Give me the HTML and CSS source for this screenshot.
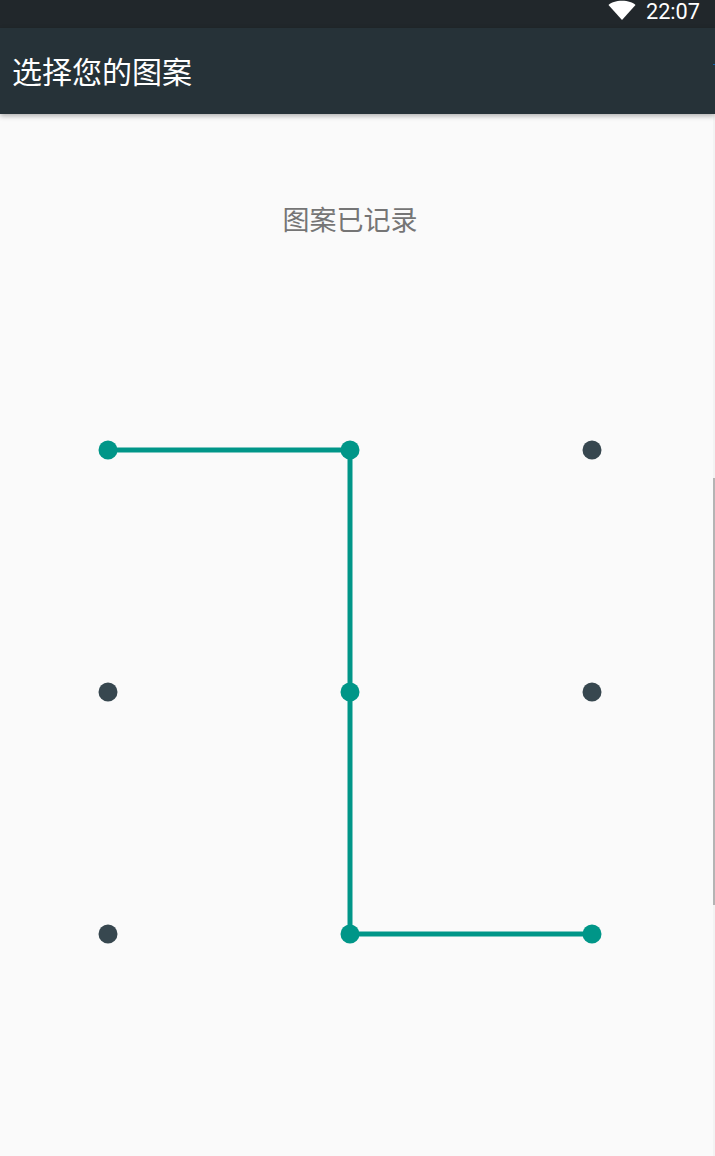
FILE: index.html
```html
<!DOCTYPE html>
<html lang="zh-CN">
<head>
<meta charset="utf-8">
<title>选择您的图案</title>
<link rel="stylesheet" href="styles.css">
</head>
<body>
<div class="screen">
  <header class="status-bar">
    <svg class="wifi" viewBox="0 0 28 20" width="28" height="20"><path d="M14 20 L0.5 5 C3 2.6 8 0.8 14 0.8 C20 0.8 25 2.6 27.5 5 Z" fill="#fff"/></svg>
    <span class="time">22:07</span>
  </header>
  <div class="app-bar">
    <h1 class="title">选择您的图案</h1>
    <span class="edge-mark"></span>
  </div>
  <main class="content">
    <p class="message">图案已记录</p>
    <svg class="pattern" viewBox="0 0 700 720" width="700" height="720">
      <polyline class="path" points="108,115 350,115 350,599 592,599"/>
      <circle class="dot on" cx="108" cy="115" r="9.5"/>
      <circle class="dot on" cx="350" cy="115" r="9.5"/>
      <circle class="dot" cx="592" cy="115" r="9.5"/>
      <circle class="dot" cx="108" cy="357" r="9.5"/>
      <circle class="dot on" cx="350" cy="357" r="9.5"/>
      <circle class="dot" cx="592" cy="357" r="9.5"/>
      <circle class="dot" cx="108" cy="599" r="9.5"/>
      <circle class="dot on" cx="350" cy="599" r="9.5"/>
      <circle class="dot on" cx="592" cy="599" r="9.5"/>
    </svg>
    <div class="scroll-track"><div class="scroll-thumb"></div></div>
  </main>
</div>
</body>
</html>
```
FILE: styles.css
```css
* { box-sizing: border-box; }
html, body { margin: 0; padding: 0; }
body { background: #fafafa; font-family: "Roboto", "Noto Sans CJK SC", sans-serif; overflow: hidden; }
.screen { width: 715px; height: 1156px; display: flex; flex-direction: column; overflow: hidden; }
.status-bar { height: 28px; flex: none; background: #21272b; display: flex; align-items: flex-start; justify-content: flex-end; padding-right: 15px; }
.wifi { margin-right: 10px; }
.time { color: #fff; font-size: 21.7px; line-height: 24px; font-weight: 400; font-family: "Roboto", sans-serif; }
.app-bar { height: 86px; flex: none; background: #263238; display: flex; align-items: center; padding-left: 12px; position: relative; z-index: 1; box-shadow: 0 2px 5px rgba(0,0,0,0.3); }
.title { margin: 0 0 2px; color: #fff; font-size: 30px; line-height: 40px; font-weight: 400; font-family: "Noto Sans CJK SC", sans-serif; }
.edge-mark { position: absolute; right: 0; top: 36px; width: 2px; height: 1px; background: #0f62ad; }
.content { flex: 1; position: relative; padding-top: 85px; }
.message { width: 700px; margin: 0; text-align: center; color: #757575; font-size: 27px; line-height: 40px; font-family: "Noto Sans CJK SC", sans-serif; }
.pattern { display: block; margin-top: 95.5px; }
.path { fill: none; stroke: #009688; stroke-width: 5; stroke-linejoin: miter; }
.dot { fill: #37474f; }
.dot.on { fill: #009688; }
.scroll-track { position: absolute; top: 0; right: 0; bottom: 0; width: 2px; background: #f3f3f3; }
.scroll-thumb { margin-top: 364px; height: 427px; background: #b4b4b4; }
```
